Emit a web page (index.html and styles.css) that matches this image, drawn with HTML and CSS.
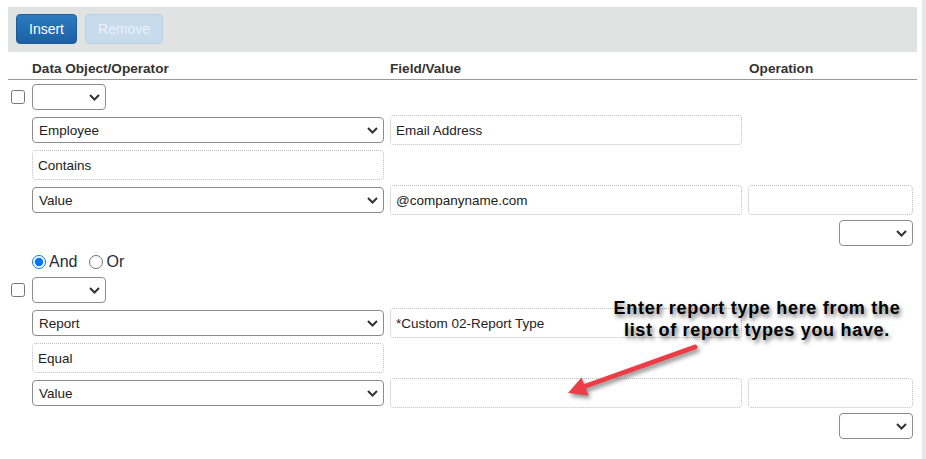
FILE: index.html
```html
<!DOCTYPE html>
<html>
<head>
    <meta charset="utf-8">
    <title>Filter</title>
    <link rel="stylesheet" href="styles.css">
</head>
<body>

<div class="page">
	<div class="wrap">
		<div class="toolbar">
			<button class="btn btn-blue">Insert</button>
			<button class="btn btn-off">Remove</button>
		</div>

		<div class="grid head">
			<span></span>
			<span>Data Object/Operator</span>
			<span>Field/Value</span>
			<span class="op">Operation</span>
		</div>

		<!-- first condition -->
		<div class="grid block">
			<div class="chk"><input type="checkbox"></div>
			<div class="c2"><span class="sel small"><select><option></option></select><svg class="caret" width="11" height="7" viewBox="0 0 11 7"><path d="M1 1l4.5 4.5L10 1" fill="none" stroke="#333" stroke-width="2"/></svg></span></div>

			<div class="c2"><span class="sel wide"><select><option>Employee</option></select><svg class="caret" width="11" height="7" viewBox="0 0 11 7"><path d="M1 1l4.5 4.5L10 1" fill="none" stroke="#333" stroke-width="2"/></svg></span></div>
			<div><input class="txt" type="text" value="Email Address"></div>

			<div class="c2"><input class="txt" type="text" value="Contains"></div>

			<div class="c2"><span class="sel wide"><select><option>Value</option></select><svg class="caret" width="11" height="7" viewBox="0 0 11 7"><path d="M1 1l4.5 4.5L10 1" fill="none" stroke="#333" stroke-width="2"/></svg></span></div>
			<div><input class="txt" type="text" value="@companyname.com"></div>
			<div><input class="txt" type="text" value=""></div>

			<div class="c4 end"><span class="sel small"><select><option></option></select><svg class="caret" width="11" height="7" viewBox="0 0 11 7"><path d="M1 1l4.5 4.5L10 1" fill="none" stroke="#333" stroke-width="2"/></svg></span></div>
		</div>

		<div class="grid radios">
			<div class="c2 opts">
				<label><input type="radio" name="join" checked>And</label>
				<label><input type="radio" name="join">Or</label>
			</div>
		</div>

		<!-- second condition -->
		<div class="grid block">
			<div class="chk"><input type="checkbox"></div>
			<div class="c2"><span class="sel small"><select><option></option></select><svg class="caret" width="11" height="7" viewBox="0 0 11 7"><path d="M1 1l4.5 4.5L10 1" fill="none" stroke="#333" stroke-width="2"/></svg></span></div>

			<div class="c2"><span class="sel wide"><select><option>Report</option></select><svg class="caret" width="11" height="7" viewBox="0 0 11 7"><path d="M1 1l4.5 4.5L10 1" fill="none" stroke="#333" stroke-width="2"/></svg></span></div>
			<div><input class="txt" type="text" value="*Custom 02-Report Type"></div>

			<div class="c2"><input class="txt" type="text" value="Equal"></div>

			<div class="c2"><span class="sel wide"><select><option>Value</option></select><svg class="caret" width="11" height="7" viewBox="0 0 11 7"><path d="M1 1l4.5 4.5L10 1" fill="none" stroke="#333" stroke-width="2"/></svg></span></div>
			<div><input class="txt" type="text" value=""></div>
			<div><input class="txt" type="text" value=""></div>

			<div class="c4 end"><span class="sel small"><select><option></option></select><svg class="caret" width="11" height="7" viewBox="0 0 11 7"><path d="M1 1l4.5 4.5L10 1" fill="none" stroke="#333" stroke-width="2"/></svg></span></div>
		</div>

		<div class="note">Enter report type here from the<br>list of report types you have.</div>
		<svg class="arrow" width="150" height="70" viewBox="0 0 150 70">
			<line x1="140" y1="12" x2="28" y2="52" stroke="#ec3d46" stroke-width="5" stroke-linecap="round"/>
			<polygon points="13,58 33.5,60.5 26.5,42.5" fill="#ec3d46"/>
		</svg>
	</div>
	<div class="edge"></div>
</div>

</body>
</html>
```

FILE: styles.css
```css
*{ margin:0; padding:0; box-sizing:border-box;}
body{ background:#fff; font-family:"Liberation Sans", Arial, sans-serif; color:#333;}

.page{ display:flex; min-height:459px;}
.wrap{ position:relative; width:909px; margin:7px 0 0 8px;}
.edge{ width:4px; margin-left:5px; background:#e6e6e6;}

/* toolbar */
.toolbar{ display:flex; gap:8px; height:45px; padding:7px 8px 8px; background:#e1e2e2;}
.btn{ height:30px; padding:0 12px; border-radius:4px; font-family:"Liberation Sans", Arial, sans-serif; font-size:14px;}
.btn-blue{ border:1px solid #1b5c9b; background:linear-gradient(#2c7bc0,#1c60a4); color:#fff;}
.btn-off{ border:1px solid #b7cfe4; background:#c6dbec; color:#eaf2f9;}

/* grid */
.grid{ display:grid; grid-template-columns:18px 352px 352px 165px; column-gap:6px;}
.c2{ grid-column:2;}
.c4{ grid-column:4;}
.end{ display:flex; justify-content:flex-end;}

.head{ padding:8px 0 1px; border-bottom:1px solid #999; font-size:13.6px; font-weight:bold; line-height:18px; color:#333;}
.head .op{ padding-left:1px;}

.block{ row-gap:5px; align-items:center; margin-top:4px;}
.block > div{ display:flex; align-items:center; height:30px;}
.block > div:first-child,.block > div:nth-child(2){ height:26px;}
.block > div:last-child{ height:26px; justify-content:flex-end;}
.chk{ padding-left:3px;}
.chk input{ width:14px; height:14px; margin:0;}

/* select */
.sel{ position:relative; display:block; height:26px;}
.sel.small{ width:74px;}
.sel.wide{ width:352px;}
.sel select{ width:100%; height:26px; padding:0 24px 0 6px; border:1px solid #8c8c8c; border-radius:4px; appearance:none; -webkit-appearance:none; background:#fff; font-family:"Liberation Sans", Arial, sans-serif; font-size:13.5px; color:#222; outline:none;}
.sel .caret{ position:absolute; right:6px; top:10px; pointer-events:none;}

.txt{ width:100%; height:30px; padding:0 5px; border:1px dotted #bdbdbd; border-radius:4px; font-family:"Liberation Sans", Arial, sans-serif; font-size:13.5px; color:#222; outline:none;}

/* and / or */
.radios{ margin:6px 0 5px;}
.opts{ display:flex; align-items:center; gap:12px; height:20px; font-size:16px; color:#1f2b3d;}
.opts label{ display:flex; align-items:center;}
.opts input{ width:14px; height:14px; margin:0 3px 0 0;}

/* annotation */
.note{ position:absolute; left:600px; top:290px; width:298px; font-size:18px; font-weight:bold; line-height:22px; letter-spacing:0.7px; text-align:center; color:#000; text-shadow:2px 3px 4px rgba(0,0,0,0.55);}
.arrow{ position:absolute; left:547px; top:328px; filter:drop-shadow(2px 3px 2px rgba(0,0,0,0.45));}
```
